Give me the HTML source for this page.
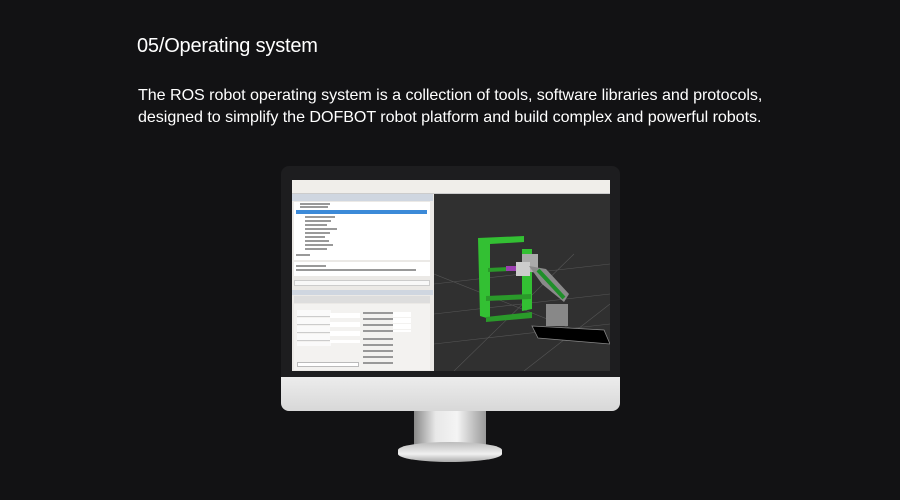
<!DOCTYPE html>
<html><head><style>
body{margin:0;width:900px;height:500px;background:#121214;overflow:hidden;position:relative;font-family:"Liberation Sans",sans-serif;color:#fff}
.t{position:absolute;left:137px;top:35px;font-size:20px;letter-spacing:-0.2px}
.p{position:absolute;left:138px;top:84px;font-size:16.1px;line-height:22px;white-space:nowrap;letter-spacing:-0.05px}
.a{position:absolute}
.l{position:absolute;height:2px;background:#999}
</style></head><body>
<div class="t">05/Operating system</div>
<div class="p">The ROS robot operating system is a collection of tools, software libraries and protocols,<br>designed to simplify the DOFBOT robot platform and build complex and powerful robots.</div>

<div class="a" style="left:414px;top:408px;width:72px;height:40px;background:linear-gradient(90deg,#888,#e8e8e8 30%,#f4f4f4 60%,#999)"></div>
<div class="a" style="left:398px;top:442px;width:104px;height:20px;border-radius:50%/40%;background:linear-gradient(180deg,#bbb,#f0f0f0 60%,#aaa)"></div>
<div class="a" style="left:281px;top:166px;width:339px;height:245px;border-radius:8px;background:#1d1d1f"></div>
<div class="a" style="left:281px;top:377px;width:339px;height:34px;border-radius:0 0 8px 8px;background:linear-gradient(#ececec,#d8d8d8)"></div>
<div class="a" style="left:292px;top:180px;width:318px;height:191px;background:#ebe9e6"></div>
<div class="a" style="left:292px;top:180px;width:318px;height:13px;background:#f0eeea;border-bottom:1px solid #ccc"></div>
<div class="a" style="left:434px;top:194px;width:176px;height:177px;background:#303030"></div>
<div class="a" style="left:292px;top:194px;width:141px;height:7px;background:#cfd6e0"></div>
<div class="a" style="left:294px;top:202px;width:136px;height:58px;background:#fff"></div>
<div class="a" style="left:296px;top:210px;width:131px;height:4px;background:#3c8ad8"></div>
<div class="l" style="left:300px;top:203px;width:30px"></div><div class="l" style="left:300px;top:206px;width:28px"></div>
<div class="l" style="left:305px;top:216px;width:30px"></div><div class="l" style="left:305px;top:220px;width:26px"></div>
<div class="l" style="left:305px;top:224px;width:22px"></div><div class="l" style="left:305px;top:228px;width:32px"></div>
<div class="l" style="left:305px;top:232px;width:25px"></div><div class="l" style="left:305px;top:236px;width:20px"></div>
<div class="l" style="left:305px;top:240px;width:24px"></div><div class="l" style="left:305px;top:244px;width:28px"></div>
<div class="l" style="left:305px;top:248px;width:22px"></div><div class="l" style="left:296px;top:254px;width:14px"></div>
<div class="a" style="left:294px;top:262px;width:136px;height:14px;background:#fff"></div>
<div class="l" style="left:296px;top:265px;width:30px"></div><div class="l" style="left:296px;top:269px;width:120px"></div>
<div class="a" style="left:294px;top:280px;width:136px;height:6px;background:#f8f8f8;border:1px solid #ccc;box-sizing:border-box"></div>
<div class="a" style="left:292px;top:290px;width:141px;height:5px;background:#cfd6e0"></div>
<div class="a" style="left:294px;top:296px;width:136px;height:7px;background:#ddd"></div>
<div class="a" style="left:294px;top:304px;width:136px;height:66px;background:#f3f2f0"></div>
<div class="a" style="left:297px;top:310px;width:34px;height:36px;background:repeating-linear-gradient(#fafafa 0 6px,#ccc 6px 7px,#f3f2f0 7px 8px)"></div>
<div class="a" style="left:330px;top:313px;width:30px;height:30px;background:repeating-linear-gradient(#fff 0 5px,#f3f2f0 5px 9px)"></div>
<div class="a" style="left:363px;top:312px;width:30px;height:20px;background:repeating-linear-gradient(#999 0 2px,#f3f2f0 2px 6px)"></div>
<div class="a" style="left:393px;top:312px;width:18px;height:20px;background:repeating-linear-gradient(#fff 0 5px,#f3f2f0 5px 6px)"></div>
<div class="a" style="left:363px;top:338px;width:30px;height:28px;background:repeating-linear-gradient(#999 0 2px,#f3f2f0 2px 6px)"></div>
<div class="a" style="left:297px;top:362px;width:62px;height:5px;background:#fff;border:1px solid #bbb;box-sizing:border-box"></div>
<svg class="a" style="left:434px;top:194px" width="176" height="177">
<g stroke="#555" stroke-width="0.6" fill="none"><path d="M0 90 L176 70 M0 120 L176 100 M0 150 L176 130 M20 177 L140 60 M90 177 L176 110 M0 80 L176 150"/></g>
<path d="M44 44 L90 42 L90 48 L56 50 L56 125 L46 122Z" fill="#33c033"/>
<path d="M88 55 L98 55 L98 115 L88 117Z" fill="#33c033"/>
<path d="M54 74 L95 72 L95 76 L54 78Z M52 102 L97 100 L97 105 L52 107Z M52 123 L98 118 L98 124 L52 128Z" fill="#2a9a2a"/>
<rect x="88" y="60" width="16" height="18" fill="#aaa"/>
<rect x="82" y="68" width="14" height="14" fill="#ccc"/>
<rect x="72" y="72" width="10" height="5" fill="#9b3fb0"/>
<path d="M95 72 L112 75 L135 100 L130 108 L108 90Z" fill="#8a8a8a"/>
<path d="M104 76 L130 104" stroke="#1f8f2a" stroke-width="4"/>
<rect x="112" y="110" width="22" height="22" fill="#888"/>
<path d="M98 132 L170 136 L176 150 L104 144Z" fill="#000" stroke="#888" stroke-width="0.8"/>
</svg>
</body></html>
